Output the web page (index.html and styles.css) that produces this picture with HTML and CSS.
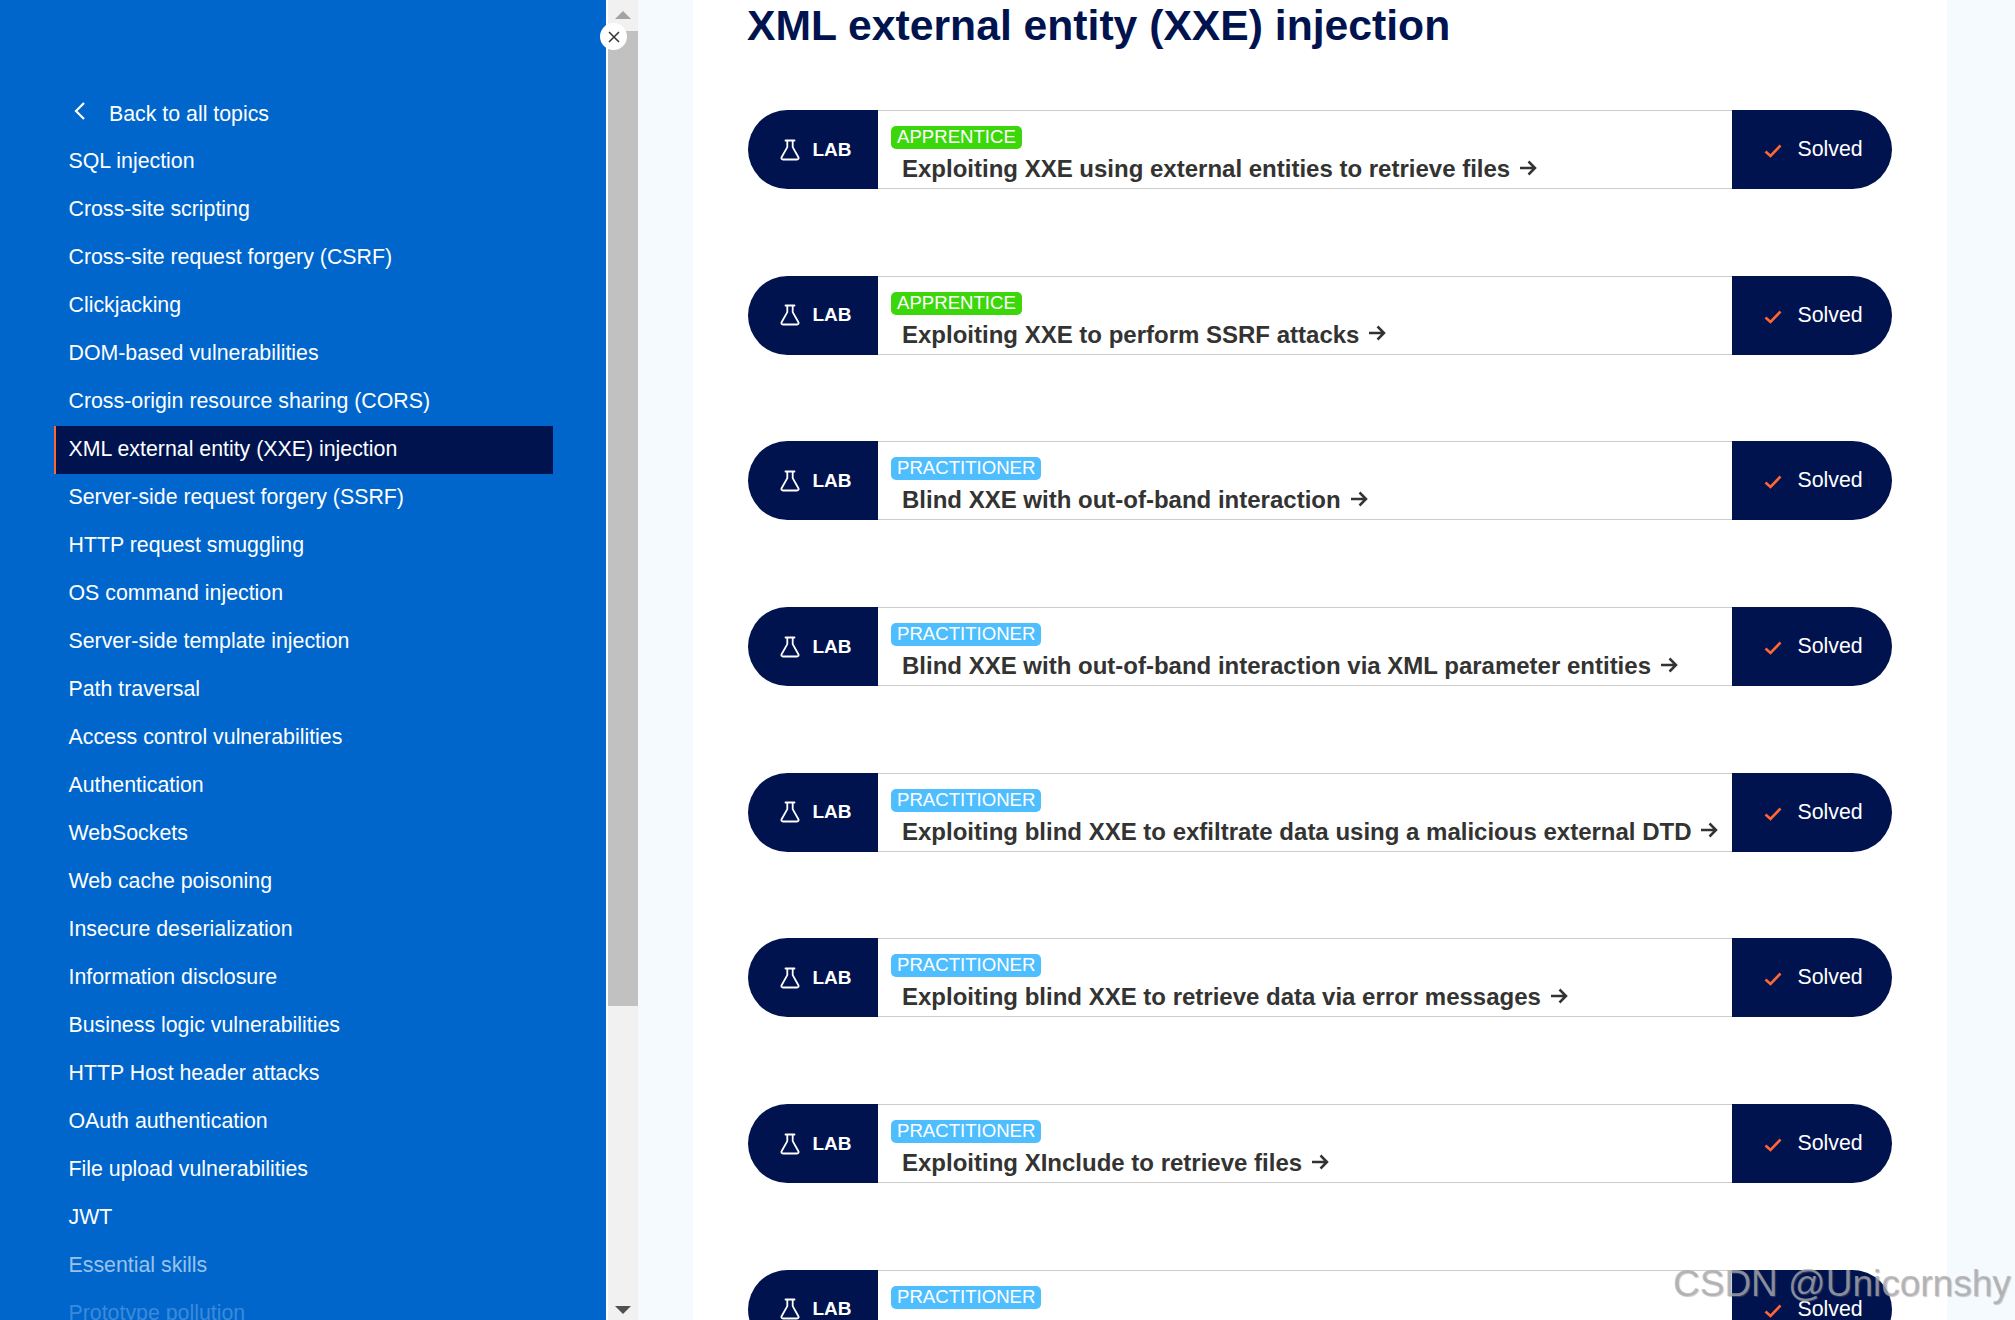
FILE: index.html
```html
<!DOCTYPE html>
<html lang="en">
<head>
<meta charset="utf-8">
<title>XML external entity (XXE) injection</title>
<link rel="stylesheet" href="styles.css">
</head>
<body>
<svg class="defs" width="0" height="0" aria-hidden="true">
  <symbol id="flask" viewBox="0 0 20 22"><path d="M5.500 1.500h9M7.300 1.500v6.600L1.600 18.200c-.7 1.300.1 2.300 1.400 2.300h14c1.300 0 2.100-1 1.400-2.300L12.700 8.100V1.500" fill="none" stroke="#fff" stroke-width="1.800" stroke-linejoin="round" stroke-linecap="round"/></symbol>
  <symbol id="check" viewBox="0 0 18 14"><path d="M1.500 7.500l5 4.500L16.500 1.500" fill="none" stroke="#ff6633" stroke-width="2.600"/></symbol>
  <symbol id="arrow" viewBox="0 0 18 16"><path d="M1 8h15M9.500 1.500L16 8l-6.500 6.500" fill="none" stroke="#333332" stroke-width="2.500"/></symbol>
</svg>
<div class="page">
  <nav class="sidebar">
    <a class="back"><svg class="chev" viewBox="0 0 12 20" width="12" height="20"><path d="M10 2L2 10l8 8" fill="none" stroke="#fff" stroke-width="2.200"/></svg><span>Back to all topics</span></a>
    <ul class="topics">
      <li>SQL injection</li>
      <li>Cross-site scripting</li>
      <li>Cross-site request forgery (CSRF)</li>
      <li>Clickjacking</li>
      <li>DOM-based vulnerabilities</li>
      <li>Cross-origin resource sharing (CORS)</li>
      <li class="active">XML external entity (XXE) injection</li>
      <li>Server-side request forgery (SSRF)</li>
      <li>HTTP request smuggling</li>
      <li>OS command injection</li>
      <li>Server-side template injection</li>
      <li>Path traversal</li>
      <li>Access control vulnerabilities</li>
      <li>Authentication</li>
      <li>WebSockets</li>
      <li>Web cache poisoning</li>
      <li>Insecure deserialization</li>
      <li>Information disclosure</li>
      <li>Business logic vulnerabilities</li>
      <li>HTTP Host header attacks</li>
      <li>OAuth authentication</li>
      <li>File upload vulnerabilities</li>
      <li>JWT</li>
      <li class="fade1">Essential skills</li>
      <li class="fade2">Prototype pollution</li>
    </ul>
  </nav>
  <div class="scrollbar">
    <span class="arrow-up"></span>
    <span class="thumb"></span>
    <span class="arrow-down"></span>
  </div>
  <button class="close" type="button"><svg viewBox="0 0 14 14" width="14" height="14"><path d="M2 2l10 10M12 2L2 12" stroke="#333" stroke-width="1.500" fill="none"/></svg></button>
  <div class="backdrop">
    <main class="content">
      <h1>XML external entity (XXE) injection</h1>
      <div class="lab">
        <div class="lab-tag"><svg class="flask"><use href="#flask"/></svg><b>LAB</b></div>
        <div class="lab-body"><span class="level green">APPRENTICE</span><a class="lab-title">Exploiting XXE using external entities to retrieve files<svg class="arr"><use href="#arrow"/></svg></a></div>
        <div class="lab-status"><svg class="check"><use href="#check"/></svg><span>Solved</span></div>
      </div>
      <div class="lab">
        <div class="lab-tag"><svg class="flask"><use href="#flask"/></svg><b>LAB</b></div>
        <div class="lab-body"><span class="level green">APPRENTICE</span><a class="lab-title">Exploiting XXE to perform SSRF attacks<svg class="arr"><use href="#arrow"/></svg></a></div>
        <div class="lab-status"><svg class="check"><use href="#check"/></svg><span>Solved</span></div>
      </div>
      <div class="lab">
        <div class="lab-tag"><svg class="flask"><use href="#flask"/></svg><b>LAB</b></div>
        <div class="lab-body"><span class="level blue">PRACTITIONER</span><a class="lab-title">Blind XXE with out-of-band interaction<svg class="arr"><use href="#arrow"/></svg></a></div>
        <div class="lab-status"><svg class="check"><use href="#check"/></svg><span>Solved</span></div>
      </div>
      <div class="lab">
        <div class="lab-tag"><svg class="flask"><use href="#flask"/></svg><b>LAB</b></div>
        <div class="lab-body"><span class="level blue">PRACTITIONER</span><a class="lab-title">Blind XXE with out-of-band interaction via XML parameter entities<svg class="arr"><use href="#arrow"/></svg></a></div>
        <div class="lab-status"><svg class="check"><use href="#check"/></svg><span>Solved</span></div>
      </div>
      <div class="lab">
        <div class="lab-tag"><svg class="flask"><use href="#flask"/></svg><b>LAB</b></div>
        <div class="lab-body"><span class="level blue">PRACTITIONER</span><a class="lab-title">Exploiting blind XXE to exfiltrate data using a malicious external DTD<svg class="arr"><use href="#arrow"/></svg></a></div>
        <div class="lab-status"><svg class="check"><use href="#check"/></svg><span>Solved</span></div>
      </div>
      <div class="lab">
        <div class="lab-tag"><svg class="flask"><use href="#flask"/></svg><b>LAB</b></div>
        <div class="lab-body"><span class="level blue">PRACTITIONER</span><a class="lab-title">Exploiting blind XXE to retrieve data via error messages<svg class="arr"><use href="#arrow"/></svg></a></div>
        <div class="lab-status"><svg class="check"><use href="#check"/></svg><span>Solved</span></div>
      </div>
      <div class="lab">
        <div class="lab-tag"><svg class="flask"><use href="#flask"/></svg><b>LAB</b></div>
        <div class="lab-body"><span class="level blue">PRACTITIONER</span><a class="lab-title">Exploiting XInclude to retrieve files<svg class="arr"><use href="#arrow"/></svg></a></div>
        <div class="lab-status"><svg class="check"><use href="#check"/></svg><span>Solved</span></div>
      </div>
      <div class="lab">
        <div class="lab-tag"><svg class="flask"><use href="#flask"/></svg><b>LAB</b></div>
        <div class="lab-body"><span class="level blue">PRACTITIONER</span></div>
        <div class="lab-status"><svg class="check"><use href="#check"/></svg><span>Solved</span></div>
      </div>
    </main>
  </div>
</div>
<div class="watermark">CSDN @Unicornshy</div>
</body>
</html>
```

FILE: styles.css
```css
* { box-sizing: border-box; }
html, body { margin: 0; height: 100%; overflow: hidden; }
body { font-family: "Liberation Sans", Arial, sans-serif; background: #f4fafd; color: #333332; }
.defs { position: absolute; }
.page { display: flex; height: 1320px; overflow: hidden; position: relative; }

.sidebar { flex: 0 0 606px; background: #0066cc; color: #fff; padding: 98px 53px 0 54px; font-size: 21.330px; overflow: hidden; }
.back { display: flex; align-items: center; height: 32px; padding-left: 20px; gap: 23px; }
.chev { margin-top: -6px; }
.topics { list-style: none; margin: 0; padding: 0; margin-top: 7.800px; }
.topics li { height: 48px; line-height: 46px; padding-left: 14.500px; white-space: nowrap; }
.topics .active { background: #00134f; border-left: 2px solid #ff6633; padding-left: 12.500px; }
.topics .fade1 { color: #99c2eb; }
.topics .fade2 { color: #3b8ad9; }

.scrollbar { flex: 0 0 32px; background: #f1f1f1; position: relative; border-left: 2px solid #fff; }
.thumb { position: absolute; left: 0; right: 0; top: 31px; height: 975px; background: #c1c1c1; }
.arrow-up, .arrow-down { position: absolute; left: 7px; width: 0; height: 0; border-left: 8px solid transparent; border-right: 8px solid transparent; }
.arrow-up { top: 11px; border-bottom: 8px solid #a3a3a3; }
.arrow-down { bottom: 6px; border-top: 8px solid #505050; }

.close { position: absolute; left: 600px; top: 23px; width: 27px; height: 27px; border-radius: 50%; border: 0; padding: 0; background: #fff; display: flex; align-items: center; justify-content: center; }

.backdrop { flex: 1; padding: 0 68px 0 55px; }
.content { background: #fff; height: 1320px; padding: 0 55px; overflow: hidden; }
h1 { margin: -.5px 0 60.500px -1px; height: 50px; font-size: 42.670px; line-height: 50px; font-weight: 700; color: #00134f; }

.lab { display: flex; height: 79px; margin-bottom: 86.700px; }
.lab-tag { flex: 0 0 130px; background: #00134f; border-radius: 40px 0 0 40px; color: #fff; display: flex; align-items: center; justify-content: center; gap: 12px; padding-left: 6px; font-size: 19px; }
.flask { width: 20px; height: 22px; }
.lab-body { flex: 1; border-top: 1.500px solid #ccc; border-bottom: 1.500px solid #ccc; padding: 15px 0 0 13px; min-width: 0; }
.level { display: block; width: max-content; height: 23px; line-height: 22px; padding: 0 6px; border-radius: 5px; color: #fff; font-size: 18.600px; }
.level.green { background: #3cd70b; }
.level.blue { background: #4ebeff; }
.lab-title { display: flex; align-items: center; margin: 5px 0 0 11px; font-size: 24px; line-height: 30px; font-weight: 700; white-space: nowrap; color: #333332; }
.arr { width: 18px; height: 16px; margin-left: 9px; margin-top: -3px; }
.lab-status { flex: 0 0 160px; background: #00134f; border-radius: 0 40px 40px 0; color: #fff; display: flex; align-items: center; gap: 16px; padding-left: 31.500px; font-size: 21.330px; }
.check { width: 18px; height: 14px; margin-top: 3px; }

.watermark { position: absolute; left: 1673px; top: 1262px; font-size: 37px; line-height: 44px; color: rgba(170, 170, 175, .75); text-shadow: 1px 1px 1px rgba(120, 120, 120, .4); white-space: nowrap; }
```
